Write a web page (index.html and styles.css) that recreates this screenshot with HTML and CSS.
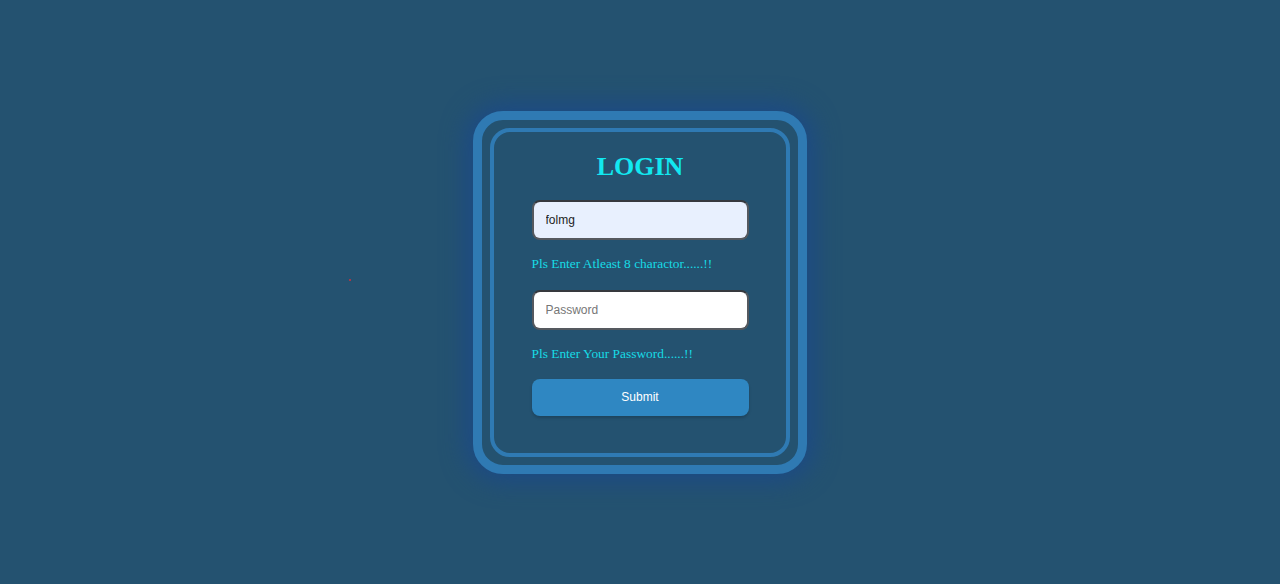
FILE: index.html
```html
<!DOCTYPE html>
<html lang="en">
<head>
<meta charset="utf-8">
<title>Login</title>
<link rel="stylesheet" href="styles.css">
</head>
<body>
<span class="dot"></span>
<main class="page">
  <form class="frame">
    <div class="card">
      <h2 class="title">LOGIN</h2>
      <input class="field filled" type="text" value="folmg">
      <p class="msg">Pls Enter Atleast 8 charactor......!!</p>
      <input class="field" type="password" placeholder="Password">
      <p class="msg msg-last">Pls Enter Your Password......!!</p>
      <button class="submit" type="button">Submit</button>
    </div>
  </form>
</main>
</body>
</html>
```
FILE: styles.css
```css
html, body {
  margin: 0;
  padding: 0;
}
body {
  background: #245270;
  font-family: "Liberation Serif", "Times New Roman", serif;
}
.page {
  min-height: 584px;
  display: flex;
  align-items: center;
  justify-content: center;
}
.dot {
  position: absolute;
  left: 349px;
  top: 279px;
  width: 2px;
  height: 2px;
  background: #d0303c;
  border-radius: 50%;
}
.frame {
  box-sizing: border-box;
  margin: 0;
  width: 334px;
  border: 9px solid #2f7ab3;
  border-radius: 30px;
  padding: 8px;
  background: #245270;
  box-shadow: 0 0 24px 7px #1c4a86;
}
.card {
  border: 4px solid #2f7ab3;
  border-radius: 20px;
  padding: 20px 0 37px;
  display: flex;
  flex-direction: column;
  align-items: center;
}
.title {
  margin: 0 0 18px;
  font-size: 26px;
  line-height: 30px;
  font-weight: bold;
  color: #12e8f0;
  font-family: "Liberation Serif", "Times New Roman", serif;
}
.field {
  box-sizing: border-box;
  width: 217px;
  height: 40px;
  margin: 0;
  padding: 0 12px;
  border: 2px solid #55595f;
  border-top-color: #36393e;
  border-radius: 8px;
  background: #ffffff;
  font-family: "Liberation Sans", Arial, sans-serif;
  font-size: 12px;
  color: #222;
  outline: none;
}
.field.filled {
  background: #e8f0fe;
}
.field::placeholder {
  color: #767676;
}
.msg {
  width: 217px;
  margin: 14px 0 16px;
  font-size: 13.4px;
  line-height: 20px;
  color: #17dbe6;
}
.msg-last {
  margin-bottom: 15px;
}
.submit {
  width: 217px;
  height: 37px;
  border: none;
  border-radius: 8px;
  background: #2f87c2;
  color: #ffffff;
  font-family: "Liberation Sans", Arial, sans-serif;
  font-size: 12px;
  box-shadow: 0 2px 3px rgba(0, 0, 0, 0.18);
  cursor: pointer;
}
```
